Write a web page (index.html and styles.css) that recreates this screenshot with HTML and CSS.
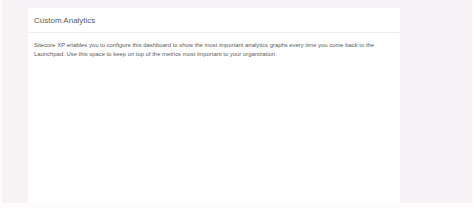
FILE: index.html
```html
<!DOCTYPE html>
<html lang="en">
<head>
    <meta charset="UTF-8">
    <title>Custom Analytics</title>
    <link rel="stylesheet" href="styles.css">
</head>
<body>
    <div class="page">
        <div class="panel">
            <div class="panel-heading">Custom Analytics</div>
            <div class="panel-body">
                Sitecore XP enables you to configure this dashboard to show the most important analytics graphs every time you come back to the<br>
                Launchpad. Use this space to keep on top of the metrics most important to your organization.
            </div>
        </div>
    </div>
</body>
</html>
```
FILE: styles.css
```css
html, body {
    margin: 0;
    height: 100%;
}
body {
    font-family: "Liberation Sans", Arial, sans-serif;
    background: #fdfbfc;
    box-sizing: border-box;
}
*, *:before, *:after {
    box-sizing: inherit;
}
.page {
    height: 203px;
    margin: 0 2px 0 2px;
    padding: 8px 72px 0 26px;
    background: #f7f2f5;
}
.panel {
    height: 100%;
    background: #fff;
}
.panel-heading {
    height: 25px;
    padding: 1px 6px 0;
    border-bottom: 1px solid #f1eef0;
    font-size: 8px;
    line-height: 24px;
    color: #5a5a5a;
}
.panel-body {
    padding: 8px 6px;
    font-size: 5.9px;
    line-height: 9px;
    color: #5a5a5a;
}
```
